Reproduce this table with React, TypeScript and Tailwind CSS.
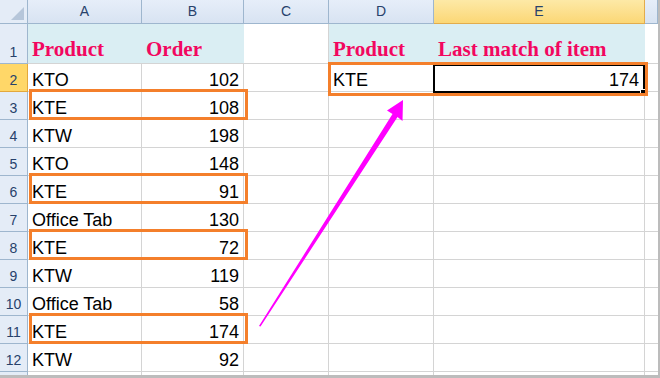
import React from "react"

const cols = ["A", "B", "C", "D", "E", "F"]

const data: [string, string][] = [
  ["KTO", "102"],
  ["KTE", "108"],
  ["KTW", "198"],
  ["KTO", "148"],
  ["KTE", "91"],
  ["Office Tab", "130"],
  ["KTE", "72"],
  ["KTW", "119"],
  ["Office Tab", "58"],
  ["KTE", "174"],
  ["KTW", "92"],
]

// rows that get an orange outline (spreadsheet row numbers)
const boxedRows = [3, 6, 8, 11]

const rowTop = (n: number) => 64 + (n - 2) * 28

const cell = "border-r border-b border-[#d4d4d4] bg-white flex items-end leading-[22px] overflow-hidden whitespace-nowrap"
const headFill = "bg-[#daeef3] border-b border-[#d4d4d4] flex items-end leading-[24px] pb-[2px] pl-[4px] text-[21px] font-bold text-[#f2075f] whitespace-nowrap overflow-hidden"
const serif = { fontFamily: '"Liberation Serif", "Times New Roman", serif' }

function RowNum({ n, active = false }: { n: number; active?: boolean }) {
  return (
    <div
      className={`flex items-end justify-center pb-[4px] text-[14px] leading-none text-[#27416b] border-r border-b ${
        active ? "bg-[#ffd768] border-[#e3a83c]" : "bg-[#e4ecf7] border-[#9eb6ce]"
      }`}
    >
      {n}
    </div>
  )
}

export default function App() {
  return (
    <div
      className="w-[660px] h-[378px] bg-[#bcbcbc] overflow-hidden"
      style={{ fontFamily: '"Liberation Sans", Arial, sans-serif' }}
    >
      <div className="relative w-[658px] h-[375px] bg-white overflow-hidden">
        <div className="grid grid-cols-[28px_114px_102px_85px_105px_211px_13px] grid-rows-[24px_40px_repeat(11,28px)_3px] text-[18px] text-black">
          {/* column headers */}
          <div className="relative bg-[#e4ecf7] border-r border-b border-[#9eb6ce]">
            <svg className="absolute right-[3px] bottom-[3px]" width="13" height="13" viewBox="0 0 13 13">
              <polygon points="13,0 13,13 0,13" fill="#b6c6da" />
            </svg>
          </div>
          {cols.map((c) => (
            <div
              key={c}
              className={`flex items-center justify-center text-[14px] text-[#27416b] border-r border-b ${
                c === "E"
                  ? "bg-gradient-to-b from-[#fde9a6] to-[#fbd775] border-[#e2ac4c]"
                  : "bg-gradient-to-b from-[#e6eef9] to-[#d8e3f2] border-[#9eb6ce]"
              }`}
            >
              {c === "F" ? "" : c}
            </div>
          ))}

          {/* row 1: titles */}
          <RowNum n={1} />
          <div className={headFill} style={serif}>Product</div>
          <div className={headFill} style={serif}>Order</div>
          <div className="bg-white border-r border-b border-[#d4d4d4]" />
          <div className={headFill} style={serif}>Product</div>
          <div className={headFill} style={serif}>Last match of item</div>
          <div className="bg-white border-b border-[#d4d4d4]" />

          {/* rows 2..12 */}
          {data.map(([name, qty], i) => {
            const n = i + 2
            return (
              <React.Fragment key={n}>
                <RowNum n={n} active={n === 2} />
                <div className={`${cell} pl-[4px]`}>{name}</div>
                <div className={`${cell} justify-end pr-[4px]`}>{qty}</div>
                <div className={cell} />
                <div className={`${cell} pl-[4px]`}>{n === 2 ? "KTE" : ""}</div>
                <div className={`${cell} justify-end pr-[5px]`}>{n === 2 ? "174" : ""}</div>
                <div className="border-b border-[#d4d4d4] bg-white" />
              </React.Fragment>
            )
          })}

          {/* partial row 13 */}
          <div className="bg-[#e4ecf7] border-r border-[#9eb6ce]" />
          <div className="border-r border-[#d4d4d4]" />
          <div className="border-r border-[#d4d4d4]" />
          <div className="border-r border-[#d4d4d4]" />
          <div className="border-r border-[#d4d4d4]" />
          <div className="border-r border-[#d4d4d4]" />
          <div />
        </div>

        {/* active cell E2 */}
        <div className="absolute left-[433px] top-[64px] w-[212px] h-[29px] border-2 border-black pointer-events-none" />
        <div className="absolute left-[640px] top-[89px] w-[6px] h-[6px] bg-black border border-white pointer-events-none" />

        {/* orange outlines */}
        {boxedRows.map((r) => (
          <div
            key={r}
            className="absolute left-[29px] w-[219px] h-[31px] border-[3px] border-[#f47f2b] pointer-events-none"
            style={{ top: rowTop(r) - 3 }}
          />
        ))}
        <div className="absolute left-[328px] top-[62px] w-[320px] h-[34px] border-[3px] border-[#f47f2b] pointer-events-none" />

        {/* arrow */}
        <svg className="absolute left-0 top-0 pointer-events-none" width="658" height="375" viewBox="0 0 658 375">
          <polygon
            points="259,326 392.5,113.9 387,110.5 403,100 402.5,121 397.5,117.1 260.5,326.5"
            fill="#ff00ff"
          />
        </svg>
      </div>
    </div>
  )
}
